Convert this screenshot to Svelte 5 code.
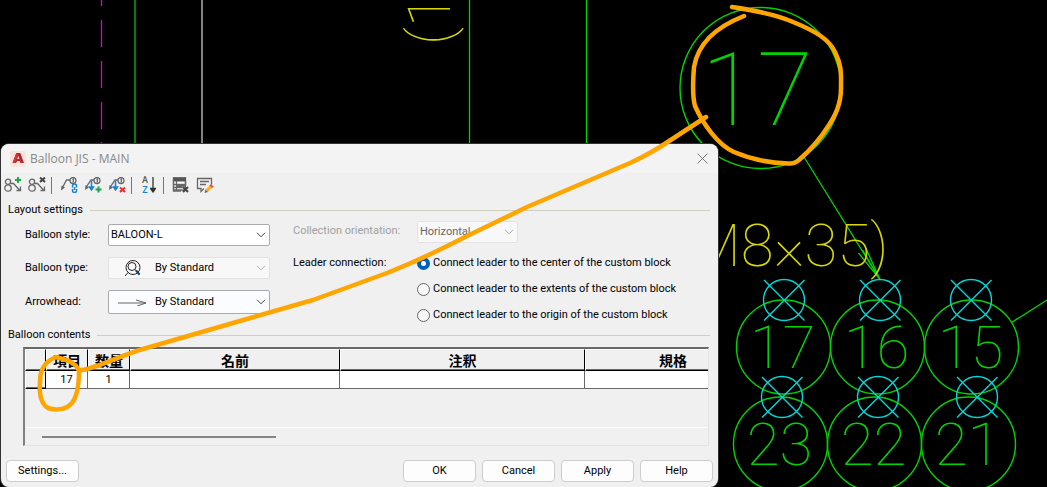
<script>
  const greenCircles = [
    { x: 783.5, y: 347, label: '17' },
    { x: 877.5, y: 347, label: '16' },
    { x: 971.5, y: 347, label: '15' },
    { x: 780.5, y: 444, label: '23' },
    { x: 874.5, y: 444, label: '22' },
    { x: 968.5, y: 444, label: '21' }
  ];
  const bolts = [
    [784, 300], [880, 300], [971, 300],
    [782, 397], [878, 397], [977, 397]
  ];
  const connections = [
    { id: 'center', text: 'Connect leader to the center of the custom block' },
    { id: 'extents', text: 'Connect leader to the extents of the custom block' },
    { id: 'origin', text: 'Connect leader to the origin of the custom block' }
  ];
  const columns = ['項目', '数量', '名前', '注釈', '規格'];
  let connection = $state('center');
</script>

{#snippet chevron()}
  <svg class="chevron" width="10" height="6" viewBox="0 0 10 6" aria-hidden="true"><path d="M1 .8 5 4.8 9 .8" /></svg>
{/snippet}

<div class="desktop">
  <svg class="drawing" aria-hidden="true">
    <path class="magenta" d="M101.500 0V6M101.500 20V47M101.500 61V88M101.500 102V129M101.500 142V150" />
    <path class="dim" d="M135 0V150" />
    <path class="gray" d="M202 0V150" />
    <path class="green" d="M469.500 0V150M586.500 0V150" />
    <path class="edge" d="M0 374H2M0 405H2" />
    <circle class="green" cx="760.500" cy="88" r="80.500" />
    <path class="green" d="M804 157 880 279.500M858.500 253 880 279.500 862.500 250M866 248.500 880 279.500M1011.500 322.500 1047 300" />
    <path class="green" d="M1047 300 1400 81" />
    <text class="cad green-text big" x="757" y="125">17</text>
    <text class="cad yellow-text" x="780" y="266">(M8×35)</text>
    <text class="cad yellow-text rotated" transform="translate(450 45) rotate(-90)">(1</text>
    {#each greenCircles as c}
      <circle class="green" cx={c.x} cy={c.y} r="47" />
      <text class="cad green-text" x={c.x - 1} y={c.y + 21}>{c.label}</text>
    {/each}
    {#each bolts as [x, y]}
      <g class="cyan">
        <circle cx={x} cy={y} r="20.500" />
        <path d="M{x - 20} {y - 20}l40.500 40.500M{x + 20.5} {y - 20}l-40.500 40.500" />
      </g>
    {/each}
  </svg>

  <main class="dialog">
    <header>
      <svg width="16" height="16" viewBox="0 0 16 16" aria-hidden="true">
        <rect width="16" height="16" rx="2" fill="#f8e4de" />
        <path d="M2.500 12 6.300 2h4L14 12h-3.600l-.7-2H7.300L6 12z" fill="#b5282d" />
        <path d="M8.300 4.800 9.400 8H7.200z" fill="#f8e4de" />
        <path d="M2.500 12 6.300 2 8 3.500 5 12z" fill="#d5343a" />
      </svg>
      <h1>Balloon JIS - MAIN</h1>
      <button class="close" aria-label="Close"><svg width="11" height="11" viewBox="0 0 11 11"><path d="M.5.500l10 10M10.500.500l-10 10" /></svg></button>
    </header>

    <div class="toolbar" role="toolbar" aria-label="Balloon tools">
      <button aria-label="Add balloon part">
        <svg width="18" height="16" viewBox="0 0 18 16"><circle cx="4" cy="4.800" r="2.600" /><circle cx="4" cy="11" r="3.200" /><path d="M7 6.500h2.500L16 13.500M16.500 9.500v4h-4" /><path class="plus" d="M14 0v6M11 3h6" /></svg>
      </button>
      <button aria-label="Remove balloon part">
        <svg width="18" height="16" viewBox="0 0 18 16"><circle cx="4" cy="4.800" r="2.600" /><circle cx="4" cy="11" r="3.200" /><path d="M7 6.500h2.500L16 13.500M16.500 9.500v4h-4" /><path class="dark" d="M12 0.500l5 4.500M17 .5 12 5" /></svg>
      </button>
      <i></i>
      <button aria-label="Link leader">
        <svg width="18" height="16" viewBox="0 0 18 16"><circle cx="13" cy="3.500" r="3" /><path d="M12.500 2.500l.8-.5v3.500M10 3H6.500L2 11.500" /><path class="fill" d="M1 13.500 1.500 8.500 5 10.500z" /><path class="blue" d="M12.500 10.500V9a2 2 0 0 1 4 0v1.500M12.500 12v1.500a2 2 0 0 0 4 0V12M14.500 10v3" /></svg>
      </button>
      <button aria-label="Add leader">
        <svg width="18" height="16" viewBox="0 0 18 16"><circle cx="13" cy="3.500" r="3" /><path d="M12.500 2.500l.8-.5v3.500M10 3H7L2 10.500" /><path class="fill" d="M1 13 1.500 8 5 10.500z" /><path class="blue tip" d="M7.500 4v8M5.500 10l2 3 2-3z" /><path class="plus" d="M14.500 9.500v6M11.500 12.500h6" /></svg>
      </button>
      <button aria-label="Remove leader">
        <svg width="18" height="16" viewBox="0 0 18 16"><circle cx="13" cy="3.500" r="3" /><path d="M12.500 2.500l.8-.5v3.500M10 3H7L2 10.500" /><path class="fill" d="M1 13 1.500 8 5 10.500z" /><path class="blue tip" d="M7.500 4v8M5.500 10l2 3 2-3z" /><path class="red" d="M12 10.500l5 4.500M17 10.500 12 15" /></svg>
      </button>
      <i></i>
      <button class="sort" aria-label="Sort">
        <span><b>A</b><b class="z">Z</b></span>
        <svg width="6" height="16" viewBox="0 0 6 16"><path class="arrow" d="M3 0v13M.5 11.500 3 15l2.500-3.500z" /></svg>
      </button>
      <i></i>
      <button aria-label="Clear table">
        <svg width="18" height="16" viewBox="0 0 18 16"><path fill="#fff" d="M1.500 1h12v12h-12z" /><path class="solid" d="M1 .5h13v4H1z" /><path d="M1.500 1v13H9M13.500 4v4M4.500 4v10M1.500 7.500h12M1.500 10.500h9M5 9h8" /><path class="dark" d="M11 10l5 5M16 10l-5 5" /></svg>
      </button>
      <button aria-label="Edit note">
        <svg width="18" height="17" viewBox="0 0 18 17"><path d="M8 11.500l-3 3v-3H1.500v-10h14v6M4 4.500h9M4 7.500h6" /><path class="pencil" d="M9.500 12.500 14 8l2.500 2.500L12 15z" /><path class="eraser" d="M13.500 8.500 15 7l2.500 2.500L16 11z" /><path class="fill" d="M9.500 12.500 12 15l-3.500 1z" /></svg>
      </button>
    </div>

    <section>
      <h2>Layout settings</h2>
      <div class="settings">
        <div class="left">
          <label for="style">Balloon style:</label>
          <div class="field">
            <select id="style"><option>BALOON-L</option></select>{@render chevron()}
          </div>
          <label for="type">Balloon type:</label>
          <div class="field disabled">
            <select id="type" class="with-icon" disabled><option>By Standard</option></select>
            <svg class="glyph" width="30" height="18" viewBox="0 0 30 18" aria-hidden="true"><circle cx="15" cy="8.500" r="7" /><circle cx="14" cy="7.500" r="4" /><path d="M17 10.500l4.500 5M7 17l3-3.500" /><path stroke="#147" stroke-width="2" d="M18 11.500l3.500 4" /></svg>
            {@render chevron()}
          </div>
          <label for="arrow">Arrowhead:</label>
          <div class="field">
            <select id="arrow" class="with-icon tall"><option>By Standard</option></select>
            <svg class="glyph soft" width="30" height="8" viewBox="0 0 30 8" aria-hidden="true"><path d="M0 5h28M18 2l10 3-9 3" /></svg>
            {@render chevron()}
          </div>
        </div>
        <div class="right">
          <label for="orientation" class="muted">Collection orientation:</label>
          <div class="field disabled short">
            <select id="orientation" disabled><option>Horizontal</option></select>{@render chevron()}
          </div>
          <span id="leader">Leader connection:</span>
          <div class="radios" role="radiogroup" aria-labelledby="leader">
            {#each connections as c}
              <label><input type="radio" name="connection" value={c.id} bind:group={connection} />{c.text}</label>
            {/each}
          </div>
        </div>
      </div>
    </section>

    <section>
      <h2>Balloon contents</h2>
      <div class="grid">
        <table>
          <colgroup><col class="c-head" /><col class="c-num" /><col class="c-num" /><col class="c-name" /><col class="c-note" /><col class="c-spec" /></colgroup>
          <thead><tr><th></th>{#each columns as c}<th scope="col">{c}</th>{/each}</tr></thead>
          <tbody><tr><th></th><td>17</td><td>1</td><td></td><td></td><td></td></tr></tbody>
        </table>
        <div class="scroll"><div></div></div>
      </div>
    </section>

    <footer>
      <button class="settings-button">Settings...</button>
      <button>OK</button>
      <button>Cancel</button>
      <button>Apply</button>
      <button>Help</button>
    </footer>
  </main>

  <svg class="markup" aria-hidden="true">
    <path d="M732 7C752 10 775 14 793 22C815 31 829 39 835 52C842 66 841 74 841 88C841 106 834 117 829 125C819 141 807 153 799 160Q795 164 788 163.500C768 163 748 158 734 152C718 145 703 124 695 106C692 95 693 79 694 67C698 43 716 27 744 16" />
    <path d="M706 117 660 147C650 153 641 158 630 163L527 207 467 236C440 250 415 262 387 273L313 300 233 323 143 349C124 354 96 369 79 370.500" />
    <path d="M79 371Q77 365 69 361L56 357C46 361 40 369 40 381C39 393 41 404 48 408C54 410 62 410 67 407C77 402 79 387 79 371" />
  </svg>
</div>

<style>
  :global(body) { margin: 0; background: #000; }
  .desktop {
    position: relative; min-height: 100vh; box-sizing: border-box; padding: 144px 329px 1px 1px; overflow: hidden;
    font: 11px/16px Roboto, sans-serif; color: #000;
  }
  .drawing, .markup { position: absolute; inset: 0; width: 100%; height: 100%; fill: none; pointer-events: none; }
  .markup path { stroke: #ffa500; stroke-width: 4.5px; stroke-linecap: round; stroke-linejoin: round; }
  .green { stroke: #00d400; stroke-width: 1.3px; }
  circle.green, .cyan { stroke-width: 1.4px; }
  .dim { stroke: #008000; stroke-width: 2; }
  .gray { stroke: #b0b0b0; stroke-width: 1.5px; }
  .magenta { stroke: #d800d8; stroke-width: 1.3px; }
  .cyan { stroke: #00d8d8; }
  .edge { stroke: #aa9a00; }
  .cad { font: 100 60px Roboto, sans-serif; text-anchor: middle; }
  .big { font-size: 102px; }
  .rotated { text-anchor: start; }
  .green-text { fill: #00d400; }
  .yellow-text { fill: #d8d800; }

  .dialog {
    position: relative; background: #f0f0f0; border-radius: 8px; overflow: hidden;
    min-width: 640px; box-shadow: 0 0 0 1px #333;
  }
  header { display: flex; align-items: center; height: 29px; padding: 0 10px 0 9px; background: #f3f3f3; }
  h1 { flex: 1; margin: 0 0 0 4px; font: 12px/16px "Open Sans", sans-serif; color: #888; }
  button { font: inherit; color: inherit; cursor: pointer; }
  .close { display: flex; padding: 0; border: 0; background: none; }
  .close svg { stroke: #777; }
  .toolbar { display: flex; align-items: center; height: 24px; }
  .toolbar button { display: flex; justify-content: center; align-items: center; width: 24px; padding: 0; border: 0; background: none; }
  .toolbar i { width: 1px; height: 17px; margin: 0 5px 0 2px; background: #777; }
  .toolbar svg { fill: none; stroke: #666; stroke-width: 1.3px; }
  .sort { gap: 2px; }
  .sort span { display: grid; }
  .sort b { font: 500 9px/10px Roboto, sans-serif; color: #555; }
  .sort .z { color: #1583d8; }
  .toolbar .plus { stroke: #1fa54a; stroke-width: 2; }
  .toolbar .dark { stroke: #444; stroke-width: 2; }
  .toolbar .red { stroke: #e03030; stroke-width: 2; }
  .toolbar .blue { stroke: #1583d8; fill: none; stroke-width: 1.5px; }
  .toolbar .tip { fill: #1583d8; }
  .toolbar .fill { fill: #666; stroke: none; }
  .toolbar .solid { fill: #555; stroke: none; }
  .toolbar .arrow { stroke: #333; fill: #333; }
  .toolbar .pencil { fill: #f7b52c; stroke: none; }
  .toolbar .eraser { fill: #ef4444; stroke: none; }

  section { padding: 0 8px 0 7px; }
  h2 { display: flex; align-items: center; gap: 7px; margin: 0; font: inherit; }
  h2::after { content: ""; flex: 1; height: 1px; background: #cfcfc0; }
  section:first-of-type { padding-top: 5px; }
  .settings { display: flex; gap: 23px; padding: 3px 0 0 17px; height: 106px; }
  .left { display: grid; grid-template-columns: 83px 162px; align-content: start; align-items: center; row-gap: 11px; padding-top: 3px; }
  .right { display: grid; grid-template-columns: 124px auto; align-content: start; row-gap: 12px; }
  .right > label { padding-top: 2px; }
  .field { position: relative; display: flex; align-items: center; }
  .short { width: 101px; }
  select {
    appearance: none; width: 100%; height: 22px; margin: 0; padding: 0 20px 0 2px; border: 1px solid #aaa;
    border-radius: 2px; background: #fff; color: #000; font: inherit; opacity: 1;
  }
  .with-icon { padding-left: 46px; background: #fbfcff; }
  .tall { height: 24px; }
  .disabled select { border-color: #e2e2e2; background: #f8f8f8; }
  .short select { color: #666; }
  .chevron { position: absolute; right: 4px; fill: none; stroke: #444; }
  .disabled .chevron { stroke: #aaa; }
  .glyph { position: absolute; left: 10px; fill: none; stroke: #222; }
  .soft { stroke: #666; }
  .muted { color: #a0a0a0; white-space: nowrap; }
  .radios { display: grid; row-gap: 10px; }
  .radios label { display: flex; align-items: center; gap: 3px; white-space: nowrap; }
  input {
    appearance: none; box-sizing: border-box; width: 13px; height: 13px; margin: 0;
    border: 1px solid #666; border-radius: 50%; background: #f8f8f8;
  }
  input:checked { border: 4px solid #005fb8; background: #fff; }

  .grid { margin: 4px 1px 0 15px; border: 1px solid #e3e3e3; border-top: 2px solid #696969; border-left: 2px solid #808080; overflow: hidden; }
  table { table-layout: fixed; width: 736px; border-collapse: separate; border-spacing: 0; }
  .c-head { width: 21px; } .c-num { width: 42px; } .c-name { width: 210px; } .c-note { width: 245px; } .c-spec { width: 176px; }
  th, td { box-sizing: border-box; padding: 0; text-align: center; }
  th { border: 1px solid; border-color: #fff #000 #000 #fff; background: #f0f0f0; box-shadow: inset 0 -1px #696969; }
  thead th { height: 22px; font: bold 14px/16px "Noto Sans CJK JP", sans-serif; }
  td { height: 18px; border: solid #696969; border-width: 0 1px 1px 0; background: #fff; line-height: 16px; }
  .scroll { margin-top: 38px; padding: 8px 17px 7px; border-top: 1px solid #fff; }
  .scroll div { width: 36%; height: 2px; background: #858585; }

  footer { display: flex; gap: 6px; padding: 14px 5px 5px; }
  footer button { box-sizing: border-box; width: 73px; height: 22px; padding: 0; border: 1px solid #ccc; border-radius: 4px; background: #fdfdfd; }
  .settings-button { margin-right: auto; }
</style>
